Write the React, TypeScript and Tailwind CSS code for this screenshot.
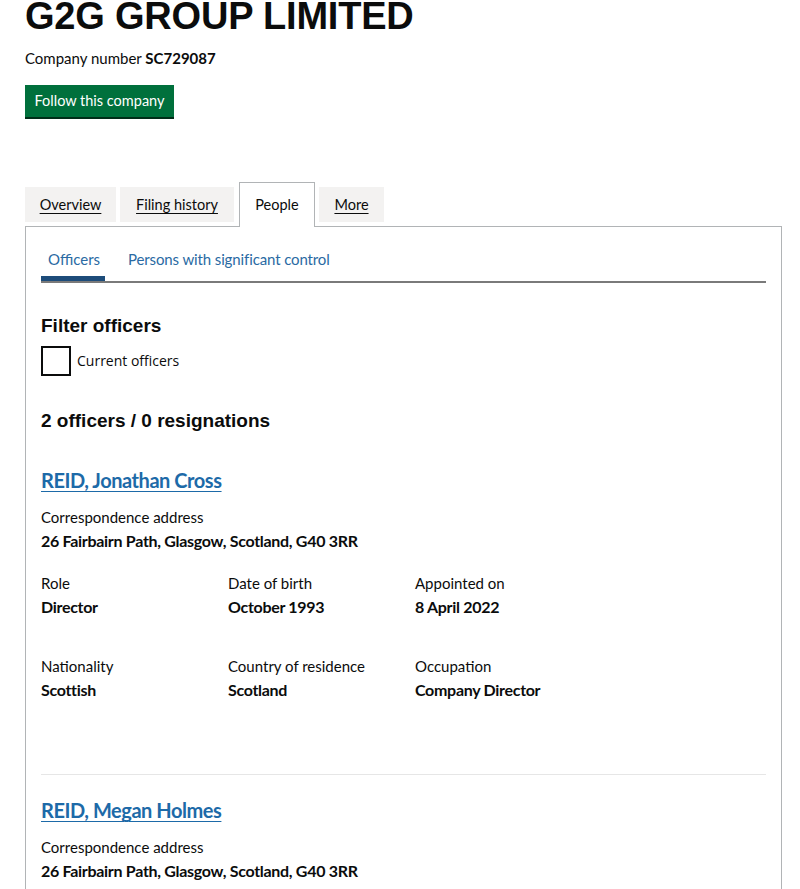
import React from "react";

const gds = "font-['Lato',sans-serif]";

function Field({ label, value }: { label: string; value: string }) {
  return (
    <div>
      <div className="text-[15px] leading-[23px] text-[#0b0c0c]">{label}</div>
      <div className="text-[16px] leading-[23px] font-bold text-[#0b0c0c] tracking-[-0.3px]">{value}</div>
    </div>
  );
}

function Officer({ name, full }: { name: string; full: boolean }) {
  return (
    <div>
      <a
        href="#"
        className="block text-[20px] leading-[24px] font-bold text-[#1d6aa8] underline decoration-1 underline-offset-[3px] tracking-[-0.45px]"
      >
        {name}
      </a>
      <div className="mt-[13px]">
        <div className="text-[15px] leading-[24px] text-[#0b0c0c]">Correspondence address</div>
        <div className="text-[16px] leading-[24px] font-bold text-[#0b0c0c] tracking-[-0.3px]">
          26 Fairbairn Path, Glasgow, Scotland, G40 3RR
        </div>
      </div>
      {full && (
        <>
          <div className="mt-[19px] grid grid-cols-[187px_187px_187px]">
            <Field label="Role" value="Director" />
            <Field label="Date of birth" value="October 1993" />
            <Field label="Appointed on" value="8 April 2022" />
          </div>
          <div className="mt-[37px] grid grid-cols-[187px_187px_187px]">
            <Field label="Nationality" value="Scottish" />
            <Field label="Country of residence" value="Scotland" />
            <Field label="Occupation" value="Company Director" />
          </div>
        </>
      )}
    </div>
  );
}

export default function App() {
  return (
    <div className={`${gds} bg-white w-[800px] h-[889px] overflow-hidden px-[25px] text-[#0b0c0c]`}>
      <h1 className="font-['Liberation_Sans',Arial,sans-serif] font-bold text-[38px] leading-[32px] text-[#0b0c0c] tracking-[-0.2px]">
        G2G GROUP LIMITED
      </h1>
      <div className="mt-[16px] text-[15px] leading-[20px]">
        Company number <span className="font-bold">SC729087</span>
      </div>
      <div className="mt-[17px]">
        <button className="bg-[#00703c] text-white text-[14.5px] leading-[20px] px-[9.5px] pt-[6px] pb-[6px] shadow-[0_2px_0_#002d18]">
          Follow this company
        </button>
      </div>

      <div className="mt-[65px] flex items-end">
        <div className="w-[91px] h-[35px] mb-[4px] bg-[#f3f2f1] flex items-center justify-center">
          <a href="#" className="text-[14.5px] underline decoration-1 underline-offset-[3px] text-[#0b0c0c]">Overview</a>
        </div>
        <div className="ml-[4px] w-[114px] h-[35px] mb-[4px] bg-[#f3f2f1] flex items-center justify-center">
          <a href="#" className="text-[14.5px] underline decoration-1 underline-offset-[3px] text-[#0b0c0c]">Filing history</a>
        </div>
        <div className="ml-[5px] w-[76px] h-[45px] mb-[-1px] bg-white border border-b-0 border-[#b1b4b6] flex items-center justify-center relative z-10">
          <span className="text-[14.5px] text-[#0b0c0c] mt-[-1px]">People</span>
        </div>
        <div className="ml-[4px] w-[65px] h-[35px] mb-[4px] bg-[#f3f2f1] flex items-center justify-center">
          <a href="#" className="text-[14.5px] underline decoration-1 underline-offset-[3px] text-[#0b0c0c]">More</a>
        </div>
      </div>

      <div className="w-[757px] border border-[#b1b4b6] px-[15px] pt-[20px] h-[700px]">
        <div className="flex border-b-2 border-[#7a7a7a]">
          <div className="w-[64px] pl-[7px] h-[34px] pb-[5px] mb-[-2px] border-b-[5px] border-[#1d4c7a] text-[15px] leading-[24px] text-[#2a6aa3]">
            Officers
          </div>
          <div className="ml-[23px] text-[15px] leading-[24px] text-[#2a6aa3] h-[34px] tracking-[-0.12px]">
            Persons with significant control
          </div>
        </div>

        <h2 className="mt-[31px] font-['Liberation_Sans',Arial,sans-serif] font-bold text-[19px] leading-[24px]">
          Filter officers
        </h2>
        <label className="mt-[8px] flex items-center gap-[6px]">
          <span className="w-[30px] h-[30px] border-2 border-[#0b0c0c] bg-white block"></span>
          <span className="font-['Open_Sans',sans-serif] text-[14px] text-[#0b0c0c] mt-[-2px]">Current officers</span>
        </label>

        <h2 className="mt-[33px] font-['Liberation_Sans',Arial,sans-serif] font-bold text-[19px] leading-[24px]">
          2 officers / 0 resignations
        </h2>

        <div className="mt-[35px]">
          <Officer name="REID, Jonathan Cross" full={true} />
        </div>
        <div className="mt-[73px] border-t border-[#e6e6e6] w-[725px]"></div>
        <div className="mt-[23px]">
          <Officer name="REID, Megan Holmes" full={false} />
        </div>
      </div>
    </div>
  );
}
